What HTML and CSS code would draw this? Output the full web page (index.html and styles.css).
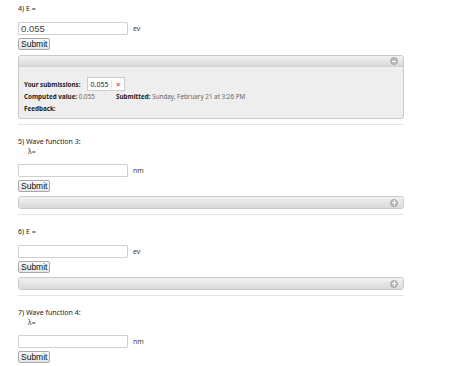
FILE: index.html
```html
<!DOCTYPE html>
<html>
<head>
<meta charset="utf-8">
<link rel="stylesheet" href="styles.css">
</head>
<body>
<div class="page">
  <section class="q">
    <div class="qtitle">4) E =</div>
    <div class="answer">
      <div class="row"><span class="inp">0.055</span><span class="unit">ev</span></div>
      <button class="submit">Submit</button>
    </div>
    <div class="panel open">
      <div class="phead"><span class="ico minus"></span></div>
      <div class="pbody">
        <div class="subrow"><b>Your submissions:</b><span class="subbox"><span class="subval">0.055</span><span class="x">✕</span></span></div>
        <div class="inforow"><span class="cv"><b>Computed value:</b> 0.055</span><span><b>Submitted:</b> Sunday, February 21 at 3:26 PM</span></div>
        <div class="inforow"><b>Feedback:</b></div>
      </div>
    </div>
  </section>
  <section class="q">
    <div class="qtitle">5) Wave function 3:</div>
    <div class="qsub">λ=</div>
    <div class="answer">
      <div class="row"><span class="inp"></span><span class="unit">nm</span></div>
      <button class="submit">Submit</button>
    </div>
    <div class="panel"><div class="phead"><span class="ico plus"></span></div></div>
  </section>
  <section class="q">
    <div class="qtitle">6) E =</div>
    <div class="answer">
      <div class="row"><span class="inp"></span><span class="unit">ev</span></div>
      <button class="submit">Submit</button>
    </div>
    <div class="panel"><div class="phead"><span class="ico plus"></span></div></div>
  </section>
  <section class="q last">
    <div class="qtitle">7) Wave function 4:</div>
    <div class="qsub">λ=</div>
    <div class="answer">
      <div class="row"><span class="inp"></span><span class="unit">nm</span></div>
      <button class="submit">Submit</button>
    </div>
  </section>
</div>
</body>
</html>
```
FILE: styles.css
```css
* { box-sizing: border-box; }
html, body { margin: 0; padding: 0; background: #fff; }
body { font-family: "Noto Sans", "DejaVu Sans", sans-serif; font-size: 7px; color: #333; }
.page { width: 404px; padding: 2px 0 0 18px; }
.q { border-bottom: 1px solid #e4e4e4; padding-bottom: 5px; margin-bottom: 10px; }
.q.last { border-bottom: none; }
.qtitle { height: 12px; padding-top: 2px; line-height: 10px; font-size: 7px; color: #1a1a1a; }
.qsub { height: 9px; line-height: 9px; padding-left: 10px; color: #333; }
.answer { padding-top: 8px; }
.row { display: flex; align-items: center; height: 13px; }
.inp { width: 110px; height: 13px; border: 1px solid #d0d0d0; border-radius: 1px; font: 9.5px/11px "Liberation Sans", Arial, sans-serif; color: #444; padding-left: 2px; background: #fff; }
.unit { margin-left: 5px; font-size: 7px; color: #444; }
.submit { display: block; margin-top: 3px; height: 12px; padding: 0 2px; border: 1px solid #a9a9a9; border-radius: 2px; background: linear-gradient(#fafafa, #e4e4e4); font: 8.5px/10px "Liberation Sans", Arial, sans-serif; color: #111; }
.panel { margin-top: 4px; border: 1px solid #c9c9c9; border-radius: 3px; background: #eee; overflow: hidden; }
.panel.open { margin-top: 5px; }
.phead { height: 11px; background: linear-gradient(#f2f2f2, #d9d9d9); display: flex; justify-content: flex-end; align-items: center; padding-right: 5px; }
.panel.open .phead { border-bottom: 1px solid #d4d4d4; }
.ico { width: 8px; height: 8px; border-radius: 50%; background: #bdbdbd; border: 1px solid #a8a8a8; position: relative; }
.ico::before { content: ""; position: absolute; left: 1px; right: 1px; top: 2.5px; height: 1px; background: #fff; }
.ico.plus::after { content: ""; position: absolute; top: 0.5px; bottom: 0.5px; left: 2.5px; width: 1px; background: #fff; }
.pbody { padding: 10px 5px 4px; height: 51px; font-size: 6.3px; }
.subrow { display: flex; align-items: center; height: 14px; }
.subrow b { color: #222; }
.subbox { margin-left: 6px; display: inline-flex; align-items: center; height: 14px; border: 1px solid #ccc; background: #fff; padding: 0 3px; }
.subval { font-size: 7px; color: #222; padding-right: 3px; border-right: 1px solid #e3e3e3; }
.x { color: #d33; font-size: 7px; font-weight: bold; margin-left: 3px; }
.inforow { display: flex; height: 12px; line-height: 12px; color: #666; }
.inforow b { color: #222; }
.cv { width: 92px; }
```
